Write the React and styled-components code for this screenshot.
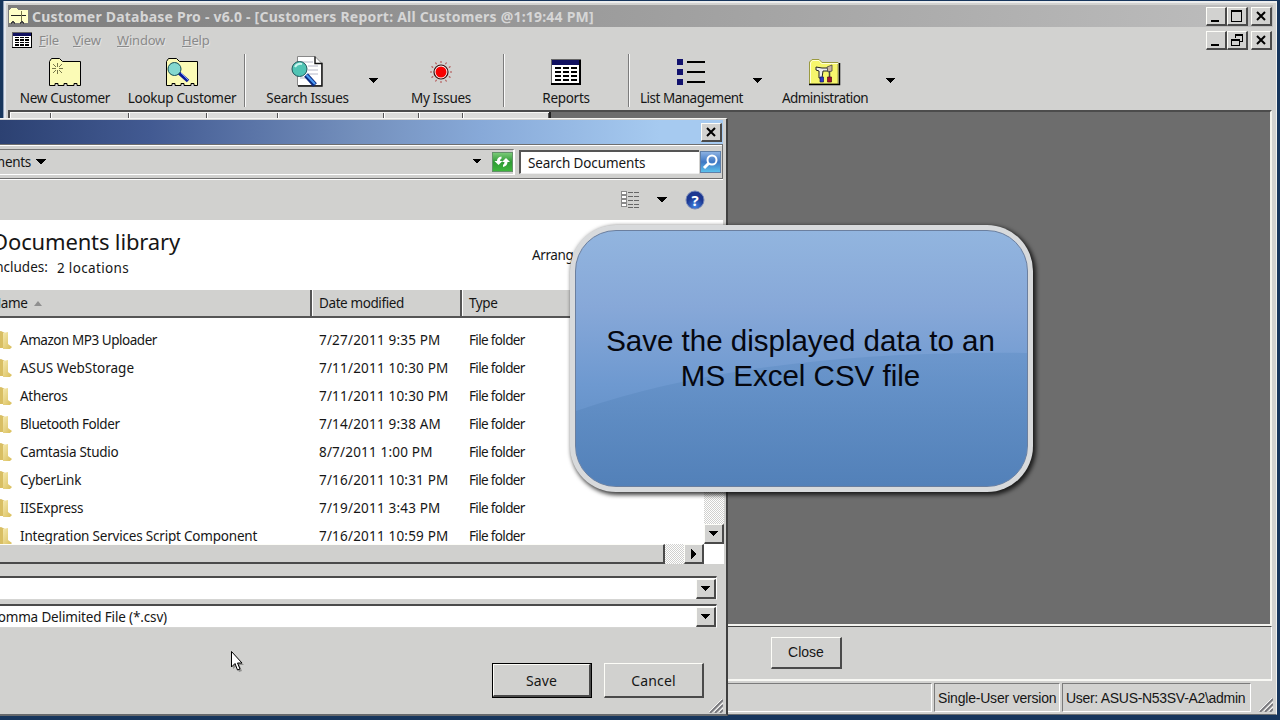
import styled, { createGlobalStyle, css } from "styled-components";

const GlobalStyle = createGlobalStyle`
  * {
    box-sizing: border-box;
  }

  body {
    margin: 0;
    overflow: hidden;
    background: #17365d;
    font-family: "Noto Sans", "Open Sans", sans-serif;
    font-size: 13.5px;
    color: #161616;
  }

  svg {
    display: block;
    flex-shrink: 0;
  }
`;

const raised = css`
  border-style: solid;
  border-width: 1px 2px 2px 1px;
  border-color: #fdfdf8 #4a4a4a #4a4a4a #fdfdf8;
`;

const Desktop = styled.div`
  position: relative;
  width: 1280px;
  height: 720px;
  padding: 1px 3px 5px 4px;
  overflow: hidden;
`;

const AppWindow = styled.div`
  display: flex;
  flex-direction: column;
  height: 714px;
  padding: 3px 3px 2px 2px;
  background: #d2d2d0;
  border-top: 2px solid #eceded;
  border-left: 2px solid #e4e8ee;
  border-right: 1px solid #f2f2ee;
  border-bottom: 1px solid #6a6d70;
  box-shadow: -1px 0 0 #8fa0b8;
`;

const TitleBar = styled.div`
  display: flex;
  align-items: center;
  height: 22px;
  flex-shrink: 0;
  margin-top: -1px;
  padding-right: 1px;
  background: linear-gradient(90deg, #7d7d7d, #9b9b9b 45%, #bebebe);
`;

const TitleText = styled.div`
  flex: 1;
  padding: 1px 0 0 2px;
  line-height: 19px;
  font-size: 14px;
  font-weight: 700;
  letter-spacing: ${({ $spacing }) => $spacing};
  color: #d6d6d6;
  white-space: nowrap;
`;

const WindowButtons = styled.div`
  display: flex;
`;

const WindowButton = styled.div`
  ${raised}
  display: flex;
  align-items: center;
  justify-content: center;
  width: 21px;
  height: 19px;
  margin-left: ${({ $gap }) => ($gap ? "3px" : 0)};
  background: #d2d2d0;
`;

const MenuBar = styled.div`
  display: flex;
  align-items: center;
  height: 26px;
  flex-shrink: 0;
  padding: 0 1px 0 4px;
`;

const MenuItem = styled.div`
  width: ${({ $width }) => $width}px;
  font-size: 13px;
  letter-spacing: -0.2px;
  color: #8a8a8a;
  text-shadow: 1px 1px 0 #e4e4e4;
  white-space: nowrap;

  &::first-letter {
    text-decoration: underline;
  }
`;

const MenuItems = styled.div`
  display: flex;
  flex: 1;
  padding-left: 7px;
`;

const Toolbar = styled.div`
  display: flex;
  height: 57px;
  flex-shrink: 0;
`;

const Tool = styled.div`
  display: flex;
  flex-direction: column;
  align-items: center;
  width: ${({ $width }) => $width}px;
`;

const ToolIcon = styled.div`
  display: flex;
  align-items: center;
  height: 36px;
  padding-top: 2px;
`;

const ToolLabel = styled.div`
  height: 18px;
  line-height: 18px;
  padding-left: 1px;
  letter-spacing: ${({ $spacing }) => $spacing || "-0.3px"};
  white-space: nowrap;
`;

const ToolCaret = styled.div`
  display: flex;
  align-items: center;
  justify-content: center;
  width: 12px;
  height: 54px;
  padding-right: 1px;
`;

const ToolSeparator = styled.div`
  width: 2px;
  height: 53px;
  margin: 1px 0 0 2px;
  border-left: 1px solid #7c7c7c;
  border-right: 1px solid #fafafa;
`;

const Client = styled.div`
  display: flex;
  flex-direction: column;
  flex: 1;
  border: 2px solid #4c4c4c;
  border-right: 2px solid #f4f3ec;
  border-bottom: 2px solid #f4f4f0;
  margin-right: 1px;
  background: #6d6d6d;
`;

const GridHead = styled.div`
  display: flex;
  width: 541px;
  height: 8px;
  background: #f7f7f4;
  border-right: 2px solid #222;
`;

const GridHeadCell = styled.div`
  width: ${({ $width }) => $width}px;
  margin-top: 1px;
  background: #dcdcda;
  border-right: 1px solid #555;
  border-left: 1px solid #fff;
`;

const FooterPanel = styled.div`
  height: 55px;
  flex-shrink: 0;
  padding: 10px 0 0 763px;
  margin-right: 1px;
  border-top: 1px solid #444;
  border-bottom: 2px solid #f8f8f4;
  border-right: 1px solid #fff;
`;

const CloseButton = styled.div`
  ${raised}
  width: 71px;
  height: 32px;
  line-height: 28px;
  text-align: center;
  font-family: "Liberation Sans", Arial, sans-serif;
  font-size: 14px;
`;

const StatusBar = styled.div`
  display: flex;
  height: 31px;
  flex-shrink: 0;
  padding-top: 2px;
`;

const StatusCell = styled.div`
  width: ${({ $width }) => $width}px;
  margin-right: 2px;
  padding-left: 3px;
  line-height: 29px;
  border: 1px solid #7b7b7b;
  border-right-color: #fff;
  border-bottom-color: #fff;
  font-family: "Liberation Sans", Arial, sans-serif;
  font-size: 14px;
  letter-spacing: ${({ $spacing }) => $spacing || "-0.2px"};
  white-space: nowrap;
`;

const StatusGrip = styled.div`
  display: flex;
  flex: 1;
  align-items: flex-end;
  justify-content: flex-end;
`;

/* the save dialog runs off the left side of the screen */
const Dialog = styled.div`
  position: absolute;
  top: 118px;
  left: -20px;
  display: flex;
  flex-direction: column;
  width: 748px;
  height: 598px;
  padding: 1px 3px 0 0;
  background: #d1d1cf;
  border-top: 1px solid #f5f5f2;
  border-right: 2px solid #404040;
  border-bottom: 2px solid #66696c;
`;

const DialogTitle = styled.div`
  display: flex;
  align-items: center;
  justify-content: flex-end;
  height: 24px;
  flex-shrink: 0;
  padding-right: 1px;
  background: linear-gradient(90deg, #2c4172 20px, #425a92 170px, #7490bd 380px, #87a9d8 500px, #a6caf0 680px);
`;

const AddressBand = styled.div`
  display: flex;
  align-items: center;
  height: 35px;
  flex-shrink: 0;
  border: 1px solid #6f6f6f;
  border-left: 0;
  box-shadow: inset 0 1px 0 #fff, 0 1px 0 #fff;
`;

const AddressBar = styled.div`
  display: flex;
  align-items: center;
  width: 535px;
  height: 26px;
  border-top: 1px solid #777;
  border-bottom: 1px solid #fff;
  border-right: 2px solid #fff;
`;

const Crumb = styled.div`
  display: flex;
  align-items: center;
  justify-content: flex-end;
  gap: 5px;
  width: 66px;
  letter-spacing: -0.3px;
`;

const CrumbFill = styled.div`
  flex: 1;
`;

const SearchBox = styled.div`
  width: 180px;
  height: 24px;
  margin: 0 1px 0 4px;
  padding-left: 7px;
  line-height: 23px;
  background: #fff;
  border: 1px solid #555;
  border-width: 2px 0 1px 2px;
  border-bottom-color: #eee;
  letter-spacing: -0.1px;
`;

const DialogTools = styled.div`
  display: flex;
  align-items: center;
  height: 41px;
  flex-shrink: 0;
  padding-left: 641px;
`;

const ToolGap = styled.div`
  width: ${({ $width }) => $width}px;
`;

const LibraryHead = styled.div`
  display: flex;
  height: 70px;
  flex-shrink: 0;
  background: #fff;
`;

const LibraryInfo = styled.div`
  width: 552px;
`;

const LibraryTitle = styled.div`
  width: 200px;
  padding-top: 5px;
  font-size: 22px;
  line-height: 32px;
  letter-spacing: -0.15px;
  text-align: right;
  white-space: nowrap;
`;

const LibrarySub = styled.div`
  display: flex;
  gap: 9px;
  justify-content: flex-end;
  width: 149px;
  line-height: 20px;
`;

const Locations = styled.span`
  padding-top: 1px;
  letter-spacing: 0.35px;
`;

const Arrange = styled.div`
  padding-top: 25px;
  line-height: 20px;
  letter-spacing: -0.4px;
`;

const ListHead = styled.div`
  display: flex;
  height: 28px;
  flex-shrink: 0;
  border-bottom: 2px solid #555;
  line-height: 29px;
`;

const HeadCell = styled.div`
  display: flex;
  align-items: center;
  gap: 7px;
  width: ${({ $width }) => $width}px;
  padding-top: 1px;
  padding-left: ${({ $pad }) => $pad}px;
  border-right: ${({ $last }) => ($last ? 0 : "2px solid #555")};
  border-left: 1px solid #fff;
  letter-spacing: -0.4px;
`;

const ListArea = styled.div`
  display: flex;
  height: 226px;
  flex-shrink: 0;
  background: #fff;
`;

const Rows = styled.div`
  width: 724px;
  flex-shrink: 0;
  padding-top: 8px;
  overflow: hidden;
`;

const Row = styled.div`
  display: grid;
  grid-template-columns: 20px 20px 299px 150px 1fr;
  align-items: center;
  height: 28px;
  white-space: nowrap;
`;

const Cell = styled.div`
  letter-spacing: ${({ $spacing }) => $spacing || "-0.3px"};
`;

const checker = css`
  background: repeating-conic-gradient(#fff 0 25%, #d0d0ce 0 50%) 0 0 / 2px 2px;
`;

const VScroll = styled.div`
  ${checker}
  display: flex;
  flex-direction: column;
  justify-content: flex-end;
  width: 20px;
  flex-shrink: 0;
`;

const HScroll = styled.div`
  ${checker}
  display: flex;
  justify-content: space-between;
  width: 744px;
  height: 20px;
  flex-shrink: 0;
  border-right: 20px solid #fff;
`;

const Thumb = styled.div`
  ${raised}
  width: 685px;
  background: #d0d0ce;
`;

const ScrollButton = styled.div`
  ${raised}
  display: flex;
  align-items: center;
  justify-content: center;
  width: 20px;
  height: 20px;
  background: #d2d2d0;
`;

const ComboBox = styled.div`
  display: flex;
  align-items: center;
  width: 737px;
  height: 24px;
  flex-shrink: 0;
  margin-top: ${({ $top }) => $top}px;
  background: #fff;
  border-top: 2px solid #4b4b4b;
  border-right: 1px solid #fff;
  border-bottom: 1px solid #d5d5d3;
`;

const ComboText = styled.div`
  display: flex;
  flex: 1;
  max-width: 187px;
  justify-content: flex-end;
  letter-spacing: -0.15px;
  white-space: nowrap;
`;

const ComboFill = styled.div`
  flex: 1;
`;

const DialogFooter = styled.div`
  display: flex;
  flex: 1;
  padding: 35px 0 0 512px;
`;

const PushButton = styled.div`
  ${raised}
  width: 100px;
  height: 35px;
  flex-shrink: 0;
  margin-right: ${({ $default }) => ($default ? "12px" : 0)};
  text-align: center;
  font-size: 14px;
  letter-spacing: 0.15px;
  outline: ${({ $default }) => ($default ? "1px solid #000" : "none")};
  outline-offset: -1px;
  border-width: ${({ $default }) => ($default ? "2px 3px 3px 2px" : "1px 2px 2px 1px")};
  line-height: ${({ $default }) => ($default ? "31px" : "33px")};
`;

const FooterGrip = styled.div`
  display: flex;
  flex: 1;
  align-items: flex-end;
  justify-content: flex-end;
  padding-bottom: 1px;
`;

const Callout = styled.div`
  position: absolute;
  top: 225px;
  left: 570px;
  width: 463px;
  height: 267px;
  padding: 5px;
  border-radius: 46px;
  background: #d8dadc;
  box-shadow: 2px 2px 4px 1px rgba(0, 0, 0, 0.75);
`;

const CalloutBody = styled.div`
  position: relative;
  display: flex;
  align-items: center;
  justify-content: center;
  height: 257px;
  overflow: hidden;
  border-radius: 41px;
  border: 1px solid #6b7f9f;
  background: linear-gradient(#92b5df, #87a8d8 30%, #6e99d0 60%, #6592c9 75%, #5b8ac4);
`;

const CalloutWave = styled.svg`
  position: absolute;
  left: 0;
  top: 0;
`;

const CalloutText = styled.div`
  position: relative;
  padding: 0 2px 1px 0;
  font-family: "Liberation Sans", Arial, sans-serif;
  font-size: 29.5px;
  line-height: 35px;
  text-align: center;
  color: #05070f;
  white-space: nowrap;
`;

const Pointer = styled.div`
  position: absolute;
  left: 230px;
  top: 650px;
`;

const Caret = ({ width = 9, height = 5 }) => (
  <svg width={width} height={height} viewBox="0 0 9 5" shapeRendering="crispEdges">
    <path d="M0 0H9L4.500 5Z" fill="#000" />
  </svg>
);

const MinimizeGlyph = () => (
  <svg width="14" height="14" shapeRendering="crispEdges">
    <path d="M2 11H10V13H2Z" />
  </svg>
);

const MaximizeGlyph = () => (
  <svg width="14" height="14" shapeRendering="crispEdges">
    <path d="M1.500 2V12.500H11.500V2" fill="none" stroke="#000" />
    <path d="M1 1H12V3H1Z" />
  </svg>
);

const RestoreGlyph = () => (
  <svg width="14" height="14" shapeRendering="crispEdges" fill="none" stroke="#000">
    <path d="M5.500 5V1.500H12.500V8.500H10M5 2.500H13M1.500 6.500H9.500V12.500H1.500ZM1 7.500H10" />
  </svg>
);

const CloseGlyph = () => (
  <svg width="14" height="14">
    <path d="M3 3L11 11M11 3L3 11" stroke="#000" strokeWidth="2" />
  </svg>
);

const CardIcon = () => (
  <svg width="22" height="18" shapeRendering="crispEdges">
    <path d="M1 3L3 1H8L10 3H20V16H1Z" fill="#ffffc8" />
    <path d="M3 8.500H18" stroke="#222" />
    <path d="M13.500 4V14" stroke="#77774a" />
    <path d="M3 17L5 14L7 17M12 17L14 14L16 17" stroke="#444" fill="none" />
  </svg>
);

const TableIcon = ({ width, height }) => (
  <svg width={width} height={height} viewBox="0 0 30 26" preserveAspectRatio="none" shapeRendering="crispEdges">
    <path d="M0 0H30V26H0Z" fill="#000" />
    <path d="M0 0H28V6H0Z" fill="#101060" />
    <path d="M0 0H30V1H1V24H0Z" fill="#666" />
    <path d="M1 6H28V24H1Z" fill="#fff" />
    {[8, 12, 16, 20].map((y) => (
      <path key={y} d={`M4 ${y + 1}H10M12 ${y + 1}H18M20 ${y + 1}H26`} stroke="#000" strokeWidth="2" />
    ))}
  </svg>
);

const CustomerCard = () => (
  <path
    d="M0.500 3.500L2.500 0.500H10.500L13.500 3.500H31.500V27.500H28V25.500H25V27.500H18V25.500H15V27.500H9V25.500H6V27.500H0.500Z"
    fill="#fbfbb6"
    stroke="#000"
  />
);

const NewCustomerIcon = () => (
  <svg width="32" height="28">
    <CustomerCard />
    <path d="M8.500 5V9M8.500 12V16M3 10.500H7M10 10.500H14M4 6L7 9M10 12L13 15M13 6L10 9M7 12L4 15" stroke="#77774a" />
  </svg>
);

const LookupCustomerIcon = () => (
  <svg width="32" height="28">
    <CustomerCard />
    <path d="M13 15L22 23" stroke="#0a1a9a" strokeWidth="3.500" />
    <path d="M15 15L22 22" stroke="#6d92ff" />
    <circle cx="8.500" cy="11" r="6.500" fill="#84d8d0" stroke="#174f58" />
  </svg>
);

const SearchIssuesIcon = () => (
  <svg width="32" height="32" viewBox="0 0 32 32">
    <path d="M6.500 0.500H24L30.500 7V29.500H6.500Z" fill="#fff" stroke="#888" />
    <path d="M24 0.500V7.500H31V30H7" fill="none" stroke="#111" strokeWidth="1.400" />
    <path d="M10 6H22M17 10H27M17 14H27M17 18H27M9 22H18" stroke="#b6b8c8" />
    <path d="M15 19L24 29" stroke="#0b2a80" strokeWidth="5" />
    <path d="M15.500 19L24 28" stroke="#4c9bf4" strokeWidth="2" />
    <circle cx="8.500" cy="13" r="7.500" fill="#50c4b4" stroke="#20535a" />
    <path d="M4 11Q6 7 11 8" fill="none" stroke="#c8f5ee" strokeWidth="2" />
  </svg>
);

const SunIcon = () => (
  <svg width="24" height="24" viewBox="-12 -12 24 24">
    {[0, 30, 60, 90, 120, 150, 180, 210, 240, 270, 300, 330].map((a) => (
      <path key={a} d="M0 -11V-9" stroke="#b04a4a" transform={`rotate(${a})`} />
    ))}
    <circle r="7" fill="#fff" stroke="#3a1010" strokeWidth="1.200" />
    <circle r="5.500" fill="#f80000" />
  </svg>
);

const ListIcon = () => (
  <svg width="28" height="26" shapeRendering="crispEdges">
    <path d="M0 0H6V6H0ZM0 10H6V16H0ZM0 20H6V26H0Z" fill="#12126e" />
    <path d="M10 2H28V4H10ZM10 12H28V14H10ZM10 22H28V24H10Z" fill="#000" />
  </svg>
);

const AdminIcon = () => (
  <svg width="33" height="28">
    <path d="M1.500 26V4L4 1.500H11L14 4.500H30V26Z" fill="#f6f66c" stroke="#9a9a40" />
    <path d="M1 26.500H31.500V5" fill="none" stroke="#000" strokeWidth="1.500" />
    <path d="M2.500 25V5L4.500 2.500H11L13.500 5.500H30" fill="none" stroke="#ffffd8" />
    <path d="M8 9L14 10H20V13H15L14 20H11V13L8 12Z" fill="#ededed" stroke="#222" />
    <path d="M19 9L24 7V13L20 14Z" fill="#c9b3a0" stroke="#444" strokeWidth="0.800" />
    <path d="M21.500 13V20" stroke="#444" strokeWidth="1.500" />
    <path d="M12 19H15.500V24H12Z" fill="#2d35c8" stroke="#15185e" strokeWidth="0.700" />
    <path d="M19.500 19H23.500V24H19.500Z" fill="#a1122e" stroke="#4e0a18" strokeWidth="0.700" />
  </svg>
);

const RefreshIcon = () => (
  <svg width="21" height="20">
    <defs>
      <linearGradient id="refresh" x2="0" y2="1">
        <stop offset="0" stopColor="#7ccc7a" />
        <stop offset="0.500" stopColor="#2f9a35" />
        <stop offset="1" stopColor="#3fb83c" />
      </linearGradient>
    </defs>
    <rect x="0.500" y="0.500" width="20" height="19" fill="url(#refresh)" stroke="#64916a" />
    <path d="M2.500 9H5Q5 5 9.500 4.500V6.500Q8 7 8 9H10.500L6.500 13Z" fill="#fff" />
    <path d="M18 10H15.500Q15.500 14 11 15V13Q12.500 12 12.500 10H10L14 6Z" fill="#fff" />
  </svg>
);

const SearchIcon = () => (
  <svg width="21" height="22">
    <defs>
      <linearGradient id="search" x2="0" y2="1">
        <stop offset="0" stopColor="#8fb4e4" />
        <stop offset="0.500" stopColor="#3f78c4" />
        <stop offset="1" stopColor="#5cc4ee" />
      </linearGradient>
    </defs>
    <rect x="0.500" y="0.500" width="20" height="21" fill="url(#search)" stroke="#5f7fa8" />
    <circle cx="12" cy="9" r="4.500" fill="none" stroke="#fff" strokeWidth="2" />
    <path d="M9 12L4 17" stroke="#fff" strokeWidth="3" />
  </svg>
);

const DetailsIcon = () => (
  <svg width="19" height="17" shapeRendering="crispEdges">
    {[0, 4, 8, 12].map((y) => (
      <g key={y}>
        <rect x="0.500" y={y + 0.5} width="5" height="3" fill="#fff" stroke="#8a8a8a" />
        <path d={`M7 ${y + 1.5}H12M13 ${y + 1.5}H18`} stroke="#666" />
      </g>
    ))}
    <path d="M7 16.500H12M13 16.500H18" stroke="#666" />
  </svg>
);

const HelpIcon = () => (
  <svg width="20" height="20">
    <defs>
      <radialGradient id="help" cx="0.500" cy="0.850">
        <stop offset="0" stopColor="#3f82e4" />
        <stop offset="1" stopColor="#1c3791" />
      </radialGradient>
    </defs>
    <circle cx="10" cy="10" r="9" fill="url(#help)" stroke="#7688b8" />
    <text x="10" y="15.500" textAnchor="middle" fontFamily="Noto Sans" fontWeight="700" fontSize="15" fill="#fff">
      ?
    </text>
  </svg>
);

const FolderIcon = () => (
  <svg width="15" height="20">
    <defs>
      <linearGradient id="folder" x2="1" y2="1">
        <stop offset="0" stopColor="#f4e8ad" />
        <stop offset="1" stopColor="#d9bd58" />
      </linearGradient>
    </defs>
    <path d="M-2 2L1 1L5 3V18H-2Z" fill="#d8be63" />
    <path d="M3 3L8 2V14L12 17L10 19H3Z" fill="url(#folder)" />
  </svg>
);

const GripIcon = () => (
  <svg width="14" height="14">
    <path d="M1 14L14 1M6 14L14 6M11 14L14 11" stroke="#77777c" strokeWidth="1.800" />
    <path d="M0 13L13 0M5 13L14 4M10 13L14 9" stroke="#fff" strokeWidth="0.800" />
  </svg>
);

const columns = [41, 78, 78, 71, 106, 35, 44, 86];

const folders = [
  { name: "Amazon MP3 Uploader", date: "7/27/2011 9:35 PM", spacing: "-0.46px" },
  { name: "ASUS WebStorage", date: "7/11/2011 10:30 PM", spacing: "-0.02px" },
  { name: "Atheros", date: "7/11/2011 10:30 PM", spacing: "-0.3px" },
  { name: "Bluetooth Folder", date: "7/14/2011 9:38 AM", spacing: "-0.42px" },
  { name: "Camtasia Studio", date: "8/7/2011 1:00 PM", spacing: "-0.3px" },
  { name: "CyberLink", date: "7/16/2011 10:31 PM", spacing: "-0.2px" },
  { name: "IISExpress", date: "7/19/2011 3:43 PM", spacing: "-0.2px" },
  { name: "Integration Services Script Component", date: "7/16/2011 10:59 PM", spacing: "-0.2px" },
];

const ToolButton = ({ width, icon, label, spacing }) => (
  <Tool $width={width}>
    <ToolIcon>{icon}</ToolIcon>
    <ToolLabel $spacing={spacing}>{label}</ToolLabel>
  </Tool>
);

const MainWindow = () => (
  <AppWindow>
    <TitleBar>
      <CardIcon />
      <TitleText $spacing="0.21px">Customer Database Pro - v6.0 - [Customers Report: All Customers @1:19:44 PM]</TitleText>
      <WindowButtons>
        <WindowButton><MinimizeGlyph /></WindowButton>
        <WindowButton><MaximizeGlyph /></WindowButton>
        <WindowButton $gap><CloseGlyph /></WindowButton>
      </WindowButtons>
    </TitleBar>
    <MenuBar>
      <TableIcon width={20} height={16} />
      <MenuItems>
        <MenuItem $width={34}>File</MenuItem>
        <MenuItem $width={44}>View</MenuItem>
        <MenuItem $width={65}>Window</MenuItem>
        <MenuItem $width={40}>Help</MenuItem>
      </MenuItems>
      <WindowButtons>
        <WindowButton><MinimizeGlyph /></WindowButton>
        <WindowButton><RestoreGlyph /></WindowButton>
        <WindowButton $gap><CloseGlyph /></WindowButton>
      </WindowButtons>
    </MenuBar>
    <Toolbar>
      <ToolButton width={113} icon={<NewCustomerIcon />} label="New Customer" />
      <ToolButton width={121} icon={<LookupCustomerIcon />} label="Lookup Customer" />
      <ToolSeparator />
      <ToolButton width={122} icon={<SearchIssuesIcon />} label="Search Issues" />
      <ToolCaret><Caret /></ToolCaret>
      <ToolButton width={121} icon={<SunIcon />} label="My Issues" />
      <ToolSeparator />
      <ToolButton width={121} icon={<TableIcon width={30} height={26} />} label="Reports" />
      <ToolSeparator />
      <ToolButton width={122} icon={<ListIcon />} label="List Management" spacing="-0.5px" />
      <ToolCaret><Caret /></ToolCaret>
      <ToolButton width={121} icon={<AdminIcon />} label="Administration" spacing="-0.55px" />
      <ToolCaret><Caret /></ToolCaret>
    </Toolbar>
    <Client>
      <GridHead>
        {columns.map((width, i) => (
          <GridHeadCell key={i} $width={width} />
        ))}
      </GridHead>
    </Client>
    <FooterPanel>
      <CloseButton>Close</CloseButton>
    </FooterPanel>
    <StatusBar>
      <StatusCell $width={924} />
      <StatusCell $width={126}>Single-User version</StatusCell>
      <StatusCell $width={189} $spacing="-0.3px">User: ASUS-N53SV-A2\admin</StatusCell>
      <StatusGrip><GripIcon /></StatusGrip>
    </StatusBar>
  </AppWindow>
);

const SaveDialog = () => (
  <Dialog>
    <DialogTitle>
      <WindowButton><CloseGlyph /></WindowButton>
    </DialogTitle>
    <AddressBand>
      <AddressBar>
        <Crumb>
          Documents
          <Caret width={10} height={6} />
        </Crumb>
        <CrumbFill />
        <Caret width={8} height={5} />
        <ToolGap $width={11} />
        <RefreshIcon />
      </AddressBar>
      <SearchBox>Search Documents</SearchBox>
      <SearchIcon />
    </AddressBand>
    <DialogTools>
      <DetailsIcon />
      <ToolGap $width={17} />
      <Caret width={10} height={6} />
      <ToolGap $width={18} />
      <HelpIcon />
    </DialogTools>
    <LibraryHead>
      <LibraryInfo>
        <LibraryTitle>Documents library</LibraryTitle>
        <LibrarySub>
          <span>Includes:</span>
          <Locations>2 locations</Locations>
        </LibrarySub>
      </LibraryInfo>
      <Arrange>Arrange by:</Arrange>
    </LibraryHead>
    <ListHead>
      <HeadCell $width={332} $pad={10}>
        Name
        <svg width="8" height="5">
          <path d="M0 5L4 0L8 5Z" fill="#8f8f8f" />
        </svg>
      </HeadCell>
      <HeadCell $width={150} $pad={6}>Date modified</HeadCell>
      <HeadCell $width={240} $pad={6} $last>Type</HeadCell>
    </ListHead>
    <ListArea>
      <Rows>
        {folders.map((folder) => (
          <Row key={folder.name}>
            <span />
            <FolderIcon />
            <Cell $spacing={folder.spacing}>{folder.name}</Cell>
            <Cell $spacing="0.19px">{folder.date}</Cell>
            <Cell $spacing="-0.65px">File folder</Cell>
          </Row>
        ))}
      </Rows>
      <VScroll>
        <ScrollButton><Caret /></ScrollButton>
      </VScroll>
    </ListArea>
    <HScroll>
      <Thumb />
      <ScrollButton>
        <svg width="5" height="10" shapeRendering="crispEdges">
          <path d="M0 0V10L5 5Z" />
        </svg>
      </ScrollButton>
    </HScroll>
    <ComboBox $top={12}>
      <ComboFill />
      <ScrollButton><Caret /></ScrollButton>
    </ComboBox>
    <ComboBox $top={4}>
      <ComboText>Comma Delimited File (*.csv)</ComboText>
      <ComboFill />
      <ScrollButton><Caret /></ScrollButton>
    </ComboBox>
    <DialogFooter>
      <PushButton $default>Save</PushButton>
      <PushButton>Cancel</PushButton>
      <FooterGrip><GripIcon /></FooterGrip>
    </DialogFooter>
  </Dialog>
);

const App = () => {
  return (
    <>
      <GlobalStyle />
      <Desktop>
        <MainWindow />
        <SaveDialog />
        <Callout>
          <CalloutBody>
            <CalloutWave width="454" height="258">
              <defs>
                <linearGradient id="wave" x2="0" y2="1">
                  <stop offset="0" stopColor="#6592c8" stopOpacity="0.600" />
                  <stop offset="1" stopColor="#5280b8" />
                </linearGradient>
              </defs>
              <path d="M0 180Q180 118 454 122V258H0Z" fill="url(#wave)" />
            </CalloutWave>
            <CalloutText>
              Save the displayed data to an
              <br />
              MS Excel CSV file
            </CalloutText>
          </CalloutBody>
        </Callout>
        <Pointer>
          <svg width="16" height="24">
            <path d="M3 4V19L6.500 16L9 22L12 21L9.500 15H14Z" fill="rgba(0,0,0,0.3)" />
            <path d="M1.500 1.500V17L5 13.500L7.500 20L10 19L7.500 13H12Z" fill="#fff" stroke="#000" />
          </svg>
        </Pointer>
      </Desktop>
    </>
  );
};

export default App;
